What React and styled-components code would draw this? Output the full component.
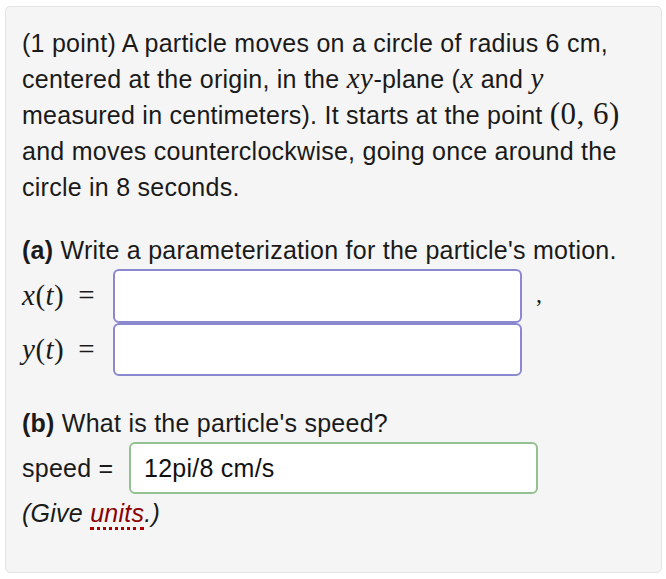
import React from 'react';
import styled, { createGlobalStyle } from 'styled-components';

const Global = createGlobalStyle`
  body {
    margin: 0;
    background: #ffffff;
    font-family: "Liberation Sans", Arial, sans-serif;
    color: #1a1a1a;
  }
`;

const Panel = styled.div`
  box-sizing: border-box;
  width: 657px;
  height: 567px;
  margin: 6px 0 0 5px;
  padding: 18px 4px 0 16px;
  background: #f5f5f5;
  border: 1px solid #e3e3e3;
  border-radius: 5px;
  font-size: 25px;
  line-height: 36px;
  letter-spacing: 0.25px;
`;

const Para = styled.p`
  margin: 0 0 ${p => p.gap || 0}px 0;
  white-space: nowrap;
`;

const M = styled.span`
  font-family: "Liberation Serif", "Times New Roman", serif;
  font-style: ${p => (p.up ? 'normal' : 'italic')};
  font-size: ${p => p.size || 29}px;
  line-height: 20px;
  letter-spacing: 0.5px;
`;

const Eq = styled.span`
  font-family: "Liberation Serif", "Times New Roman", serif;
  font-size: 29px;
  margin-left: 14px;
`;

const Row = styled.div`
  display: flex;
  align-items: center;
  height: ${p => p.h || 54}px;
`;

const Label = styled.div`
  width: ${p => p.w}px;
  flex: none;
  white-space: nowrap;
`;

const Field = styled.div`
  box-sizing: border-box;
  width: ${p => p.w}px;
  height: ${p => p.h}px;
  background: #ffffff;
  border: 2px solid ${p => (p.ok ? '#93c191' : '#8a89cf')};
  border-radius: 6px;
  padding-left: 13px;
  display: flex;
  align-items: center;
  font-size: 25px;
  color: #111;
`;

const Comma = styled.span`
  margin-left: 14px;
  font-family: "Liberation Serif", serif;
  font-size: 24px;
  position: relative;
  top: -2px;
`;

const Units = styled.span`
  color: #8b0000;
  border-bottom: 3px dotted #a00;
`;

export default function App() {
  return (
    <>
      <Global />
      <Panel>
        <Para gap={27}>
          (1 point) A particle moves on a circle of radius 6 cm,
          <br />
          centered at the origin, in the <M>xy</M>-plane (<M>x</M> and <M>y</M>
          <br />
          measured in centimeters). It starts at the point <M up size={31}>(0, 6)</M>
          <br />
          and moves counterclockwise, going once around the
          <br />
          circle in 8 seconds.
        </Para>
        <Para>
          <b>(a)</b> Write a parameterization for the particle's motion.
        </Para>
        <Row h={55}>
          <Label w={91}>
            <M>x</M><M up>(</M><M>t</M><M up>)</M><Eq>=</Eq>
          </Label>
          <Field w={409} h={54} />
          <Comma>,</Comma>
        </Row>
        <Row h={53}>
          <Label w={91}>
            <M>y</M><M up>(</M><M>t</M><M up>)</M><Eq>=</Eq>
          </Label>
          <Field w={409} h={53} />
        </Row>
        <Para gap={0} style={{ marginTop: 29 }}>
          <b>(b)</b> What is the particle's speed?
        </Para>
        <Row h={54}>
          <Label w={107}>speed =</Label>
          <Field ok w={409} h={52}>12pi/8 cm/s</Field>
        </Row>
        <Para>
          <i>(Give <Units>units</Units>.)</i>
        </Para>
      </Panel>
    </>
  );
}
